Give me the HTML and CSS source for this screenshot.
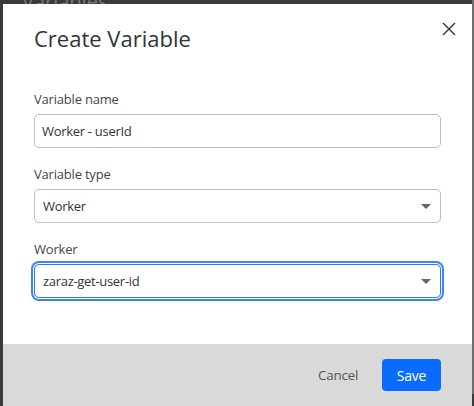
FILE: index.html
```html
<!DOCTYPE html>
<html>
<head>
<meta charset="utf-8">
<link rel="stylesheet" href="styles.css">
</head>
<body>
<div class="page">
  <div class="page-title">Variables</div>
</div>
<div class="modal">
  <div class="modal-body">
    <div class="modal-head">
      <h1 class="title">Create Variable</h1>
      <button class="close" aria-label="Close">
        <svg width="14" height="14" viewBox="0 0 14 14"><path d="M1 1 L13 13 M13 1 L1 13" stroke="#333" stroke-width="1.4" fill="none"/></svg>
      </button>
    </div>
    <div class="field">
      <label class="label">Variable name</label>
      <div class="input">Worker - userId</div>
    </div>
    <div class="field">
      <label class="label">Variable type</label>
      <div class="input select">Worker<span class="caret"></span></div>
    </div>
    <div class="field">
      <label class="label">Worker</label>
      <div class="input select focused">zaraz-get-user-id<span class="caret"></span></div>
    </div>
  </div>
  <div class="modal-foot">
    <button class="btn-cancel">Cancel</button>
    <button class="btn-save">Save</button>
  </div>
</div>
</body>
</html>
```
FILE: styles.css
```css
html, body {
  margin: 0;
  padding: 0;
  width: 474px;
  height: 406px;
  overflow: hidden;
  background: #3a3a3a;
  font-family: "Open Sans", "Noto Sans", sans-serif;
}
.page {
  height: 406px;
  border-right: 2px solid #6e6e6e;
  box-sizing: border-box;
  width: 474px;
}
.page-title {
  padding-left: 22px;
  margin-top: -12px;
  font-size: 20px;
  color: #777;
}
.modal {
  position: absolute;
  left: 3px;
  top: 4px;
  width: 469px;
  height: 402px;
  background: #fff;
  display: flex;
  flex-direction: column;
}
.modal-body {
  flex: 1;
  padding: 0 31px 0 31px;
}
.modal-head {
  display: flex;
  justify-content: space-between;
  align-items: flex-start;
  height: 85px;
}
.title {
  margin: 19px 0 0 0;
  font-weight: 400;
  font-size: 22px;
  color: #333;
  letter-spacing: 0;
}
.close {
  border: 0;
  background: none;
  padding: 0;
  margin: 18px -15px 0 0;
  width: 14px;
  height: 14px;
  display: flex;
}
.field {
  display: flex;
  flex-direction: column;
  margin-bottom: 16px;
}
.label {
  font-size: 13px;
  letter-spacing: -0.2px;
  color: #444;
  line-height: 20px;
  margin-bottom: 5px;
}
.input {
  height: 34px;
  box-sizing: border-box;
  border: 1px solid #bdbdbd;
  border-radius: 5px;
  padding: 0 7px;
  display: flex;
  align-items: center;
  font-size: 13px;
  letter-spacing: -0.3px;
  color: #333;
  position: relative;
}
.select {
  padding-left: 8px;
}
.caret {
  position: absolute;
  right: 9px;
  top: 14px;
  width: 0;
  height: 0;
  border-left: 5px solid transparent;
  border-right: 5px solid transparent;
  border-top: 5px solid #666;
}
.focused {
  border: 1px solid #2b7bf0;
  box-shadow: 0 0 0 1px #fff, 0 0 0 3px #3b84f2;
}
.modal-foot {
  height: 62px;
  background: #d9d9d9;
  display: flex;
  align-items: center;
  justify-content: flex-end;
  padding: 0 31px 0 0;
  gap: 24px;
}
.btn-cancel {
  border: 0;
  background: none;
  font-family: inherit;
  font-size: 13.5px;
  letter-spacing: -0.3px;
  color: #555;
  padding: 0;
}
.btn-save {
  border: 0;
  background: #0a6cff;
  color: #fff;
  font-family: inherit;
  font-size: 14px;
  letter-spacing: -0.2px;
  border-radius: 4px;
  width: 59px;
  height: 32px;
}
```
